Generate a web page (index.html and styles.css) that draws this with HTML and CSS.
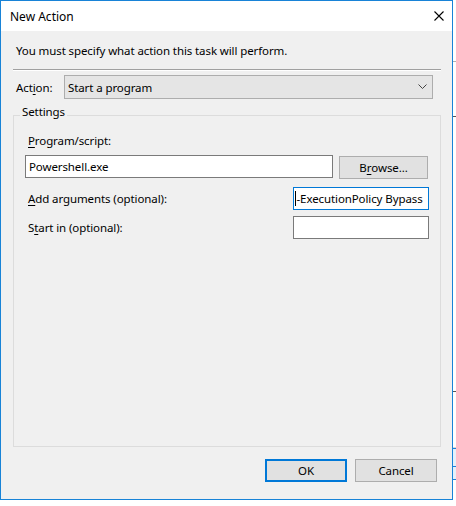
FILE: index.html
```html
<!DOCTYPE html>
<html lang="en">
<head>
<meta charset="utf-8">
<title>New Action</title>
<link rel="stylesheet" href="styles.css">
</head>
<body>
<div class="desk">
  <div class="window">
    <div class="titlebar">
      <span class="title">New Action</span>
      <svg class="close" width="10" height="10" viewBox="0 0 10 10" aria-hidden="true">
        <path d="M0.5 0.5L9.5 9.5M9.5 0.5L0.5 9.5" stroke="#000" stroke-width="1.1" fill="none"/>
      </svg>
    </div>
    <div class="client">
      <p class="instr">You must specify what action this task will perform.</p>
      <div class="sep"></div>
      <div class="action-row">
        <span class="lbl action-lbl">Act<u>i</u>on:</span>
        <div class="combo">
          <span class="combo-text">Start a program</span>
          <svg class="chevron" width="9" height="5" viewBox="0 0 9 5" aria-hidden="true">
            <path d="M0.5 0.5L4.5 4.5L8.5 0.5" stroke="#444" stroke-width="1" fill="none"/>
          </svg>
        </div>
      </div>
      <fieldset class="group">
        <legend class="legend">Settings</legend>
        <div class="group-body">
          <div class="lbl field-lbl"><u>P</u>rogram/script:</div>
          <div class="prog-row">
            <div class="textbox prog-box">Powershell.exe</div>
            <div class="btn browse">B<u>r</u>owse...</div>
          </div>
          <div class="field-row args-row">
            <span class="lbl field-lbl"><u>A</u>dd arguments (optional):</span>
            <div class="textbox small-box focused"><span class="caret"></span><span class="tb-text">-ExecutionPolicy Bypass</span></div>
          </div>
          <div class="field-row start-row">
            <span class="lbl field-lbl">S<u>t</u>art in (optional):</span>
            <div class="textbox small-box"></div>
          </div>
        </div>
      </fieldset>
      <div class="footer">
        <div class="btn dlg-btn default">OK</div>
        <div class="btn dlg-btn">Cancel</div>
      </div>
    </div>
  </div>
  <div class="backdrop"></div>
</div>
</body>
</html>
```

FILE: styles.css
```css
html, body {
  margin: 0;
  padding: 0;
}

body {
  width: 456px;
  height: 506px;
  overflow: hidden;
  background: #ffffff;
  font-family: "Segoe UI", "Noto Sans", "Open Sans", sans-serif;
  font-size: 11.5px;
  letter-spacing: -0.1px;
  line-height: 15px;
  color: #000000;
}

.desk {
  display: flex;
  height: 506px;
}

.window {
  flex: none;
  width: 453px;
  height: 500px;
  box-sizing: border-box;
  border: 1px solid #1883d7;
  display: flex;
  flex-direction: column;
}

.titlebar {
  flex: none;
  height: 30px;
  background: #ffffff;
  display: flex;
  align-items: center;
  justify-content: space-between;
  padding: 0 8px 0 9px;
}

.title {
  font-size: 12px;
  letter-spacing: 0;
}

.close {
  display: block;
}

.client {
  flex: 1;
  min-height: 0;
  background: #f0f0f0;
  display: flex;
  flex-direction: column;
  padding: 12px 0 17px 0;
}

.instr {
  margin: 0 0 0 15px;
}

.sep {
  margin: 11px 11px 0 12px;
  height: 0;
  border-top: 1px solid #a0a0a0;
  border-bottom: 1px solid #ffffff;
}

.action-row {
  display: flex;
  align-items: center;
  margin: 4px 19px 0 15px;
}

.action-lbl {
  width: 48px;
  flex: none;
}

.lbl u {
  text-decoration: underline;
  text-underline-offset: 2px;
}

.combo {
  flex: 1;
  height: 24px;
  box-sizing: border-box;
  border: 1px solid #adadad;
  background: #e5e5e5;
  display: flex;
  align-items: center;
  justify-content: space-between;
  padding: 0 5px 0 3px;
}

.chevron {
  display: block;
  margin-top: -2px;
}

.group {
  flex: 1;
  min-height: 0;
  min-width: 0;
  margin: 5px 11px 0 12px;
  padding: 0;
  border: 1px solid #dcdcdc;
}

.legend {
  margin-left: 6px;
  padding: 0 2px 8px 2px;
  line-height: 15px;
}

.group-body {
  padding: 6px 11px 0 11px;
}

.field-lbl {
  margin-left: 3px;
}

.prog-row {
  display: flex;
  align-items: flex-start;
  gap: 6px;
  margin-top: 7px;
}

.textbox {
  height: 23px;
  box-sizing: border-box;
  border: 1px solid #7a7a7a;
  background: #ffffff;
  display: flex;
  align-items: center;
  padding: 0 3px;
  white-space: nowrap;
  overflow: hidden;
}

.prog-box {
  flex: 1;
}

.btn {
  height: 23px;
  box-sizing: border-box;
  border: 1px solid #adadad;
  background: #e1e1e1;
  display: flex;
  align-items: center;
  justify-content: center;
}

.btn u {
  text-decoration: underline;
  text-underline-offset: 2px;
}

.browse {
  flex: none;
  width: 89px;
  margin: 1px 1px 0 0;
}

.field-row {
  display: flex;
  align-items: center;
  justify-content: space-between;
}

.args-row {
  margin-top: 8px;
}

.start-row {
  margin-top: 6px;
}

.small-box {
  width: 136px;
  flex: none;
}

.focused {
  border-color: #0078d7;
  padding-left: 1px;
}

.caret {
  flex: none;
  width: 1px;
  height: 15px;
  background: #000000;
}

.tb-text {
  padding-left: 0.5px;
}

.footer {
  flex: none;
  display: flex;
  justify-content: flex-end;
  gap: 8px;
  margin: 12px 15px 0 0;
}

.dlg-btn {
  width: 82px;
}

.default {
  border: 2px solid #0078d7;
}

.backdrop {
  flex: 1;
  height: 506px;
  background: linear-gradient(to bottom,
    #ffffff 0 61px,
    #b0b0b0 61px 62px,
    #ffffff 62px 116px,
    #555555 116px 117px,
    #ffffff 117px 391px,
    #555555 391px 392px,
    #ffffff 392px 447px,
    #d9d9d9 447px 448px,
    #1e7fd4 448px 449px,
    #e5f1fb 449px 466px,
    #1e7fd4 466px 467px,
    #e5f1fb 467px 479px,
    #1e7fd4 479px 480px,
    #ffffff 480px);
}
```
